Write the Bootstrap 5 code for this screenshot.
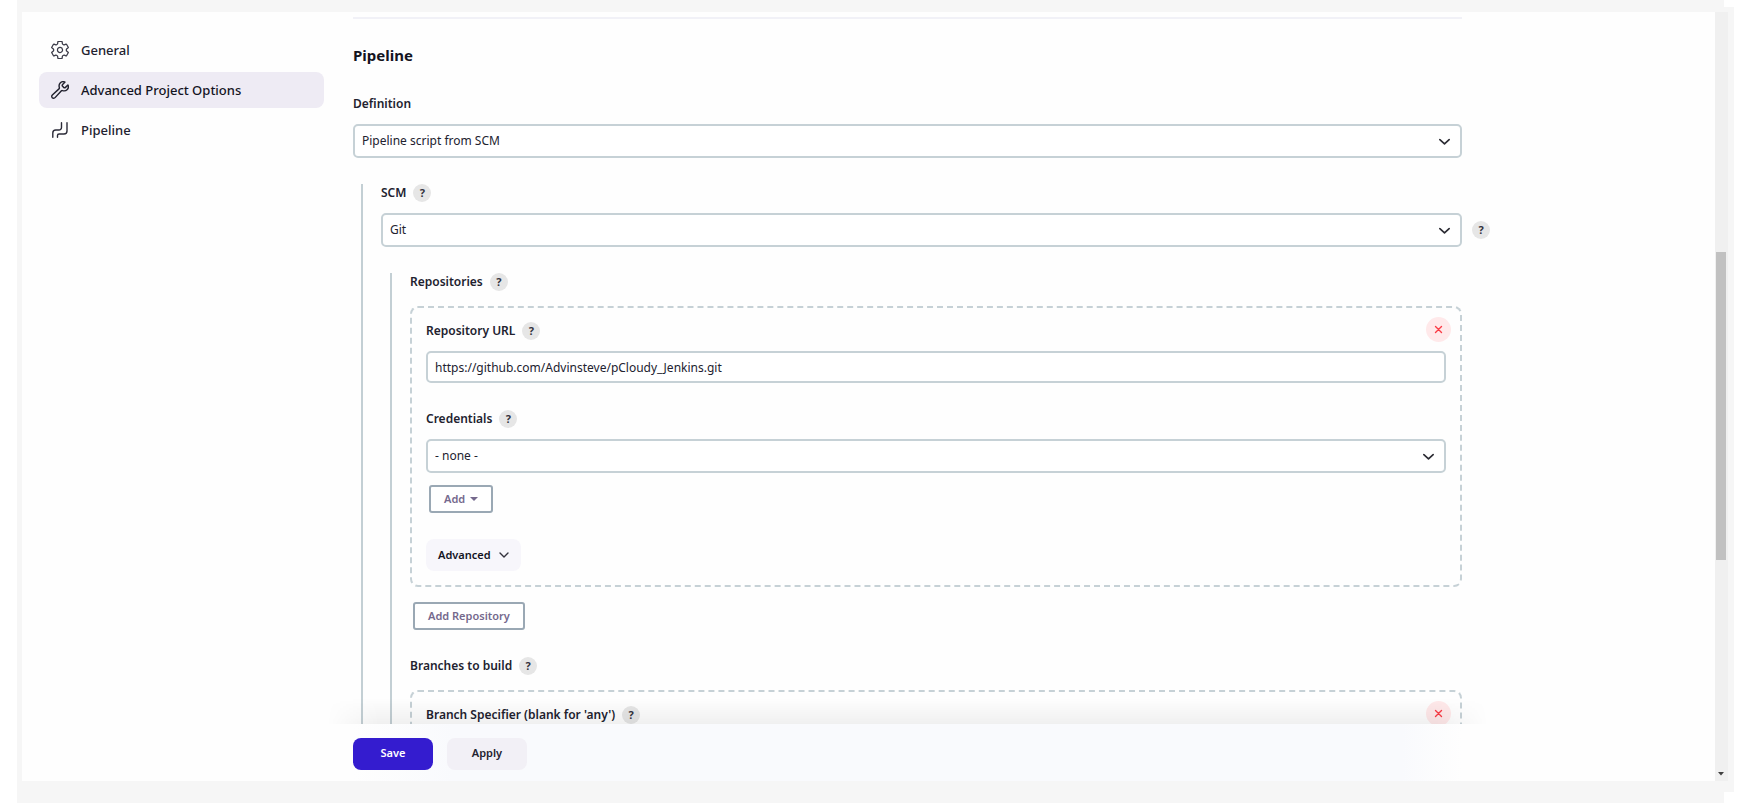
<!DOCTYPE html>
<html lang="en">
<head>
<meta charset="utf-8">
<meta name="viewport" content="width=device-width, initial-scale=1">
<title>Pipeline configuration</title>
<link rel="stylesheet" href="https://cdn.jsdelivr.net/npm/bootstrap@5.3.0/dist/css/bootstrap.min.css">
<style>
  body { font-family: "Noto Sans", "Open Sans", sans-serif; font-size: 12px; line-height: 18px; color: #22222f; background: #fff; }
  .stage { padding: 0 25px 0 17px; }
  /* grey surround with its two stepped right-hand corners */
  .surround {
    background: #f6f6f6; padding: 12px 6px 22px 5px;
    clip-path: polygon(0 0, calc(100% - 10px) 0, calc(100% - 10px) 7px, 100% 7px, 100% calc(100% - 11px), calc(100% - 10px) calc(100% - 11px), calc(100% - 10px) 100%, 0 100%);
  }
  .app-window { background: #fefefe; }

  .side-menu { width: 331px; padding: 20px 29px 0 17px; }
  .side-menu .nav { gap: 4px; }
  .side-menu .nav-link { display: flex; align-items: center; gap: 12px; height: 36px; padding: 0 12px; border-radius: 8px; color: #22222f; font-size: 13px; font-weight: 500; }
  .side-menu .nav-link.active { background: #eeebf4; color: #14141f; }

  .config-form { padding: 5px 253px 0 0; min-height: 0; }
  .section-rule { height: 2px; background: #f1f1f7; }
  .section-title { font-size: 15px; line-height: 24px; font-weight: 700; color: #14141f; margin: 24px 0 0; }
  .field-label { font-weight: 600; line-height: 18px; }
  .label-row { display: flex; align-items: center; gap: 7px; height: 18px; }
  .label-row + .form-control, .label-row + .select-side, .label-row + .form-select, .field-label + .form-select { margin-top: 11px; }
  .label-row + .repeat-box { margin-top: 15px; }
  .form-control + .label-row, .outline-btn + .label-row { margin-top: 27px; }

  .form-control, .form-select {
    border: 2px solid #c6d1d6; border-radius: 5px; color: #22222f; background-color: #fff;
    font-size: 12px; line-height: 18px; padding: 0 7px; height: 34px;
  }
  .form-control { height: 32px; }
  .form-select {
    padding-right: 36px; background-position: right 9px center; background-size: 13px 13px;
    background-image: url("data:image/svg+xml,%3csvg xmlns='http://www.w3.org/2000/svg' viewBox='0 0 14 14'%3e%3cpath fill='none' stroke='%232b2b33' stroke-width='1.8' stroke-linecap='round' stroke-linejoin='round' d='M2 5l5 4.5L12 5'/%3e%3c/svg%3e");
  }

  .help-btn { width: 18px; height: 18px; padding: 0; border: 0; border-radius: 50%; background: #e6e6e6; color: #33333d; font-size: 11px; line-height: 18px; font-weight: 700; flex: none; }
  .select-side { position: relative; }
  .select-side > .help-btn { position: absolute; left: calc(100% + 10px); top: 8px; }

  .nest { border-left: 2px solid #c3cfd4; padding-left: 18px; margin-top: 26px; }
  .nest-outer { margin-left: 8px; }
  .nest-inner { margin-left: 9px; }
  .repeat-box { border: 2px dashed #c6d1d6; border-radius: 8px; padding: 14px; position: relative; }
  .remove-btn { position: absolute; right: 9px; top: 9px; width: 25px; height: 25px; padding: 0; border: 0; border-radius: 50%; background: #ffe9ea; display: flex; align-items: center; justify-content: center; }

  .outline-btn { display: block; border: 2px solid #9aa8b4; border-radius: 3px; background: #fff; color: #75698d; font-size: 11px; line-height: 16px; font-weight: 600; height: 28px; padding: 0 13px; margin: 15px 0 0 3px; }
  .form-select + .outline-btn { margin-top: 12px; }
  .outline-btn.dropdown-toggle::after { margin-left: 5px; vertical-align: 2px; border-width: 4px 4px 0; }
  .soft-btn { border: 0; border-radius: 8px; height: 32px; font-size: 11px; font-weight: 600; color: #14141f; background: #f7f6fb; padding: 0 12px; margin-top: 26px; }

  .action-bar {
    height: 57px; margin-right: 253px; padding-top: 2px; gap: 14px; position: relative;
    background: linear-gradient(90deg, #fefefe 0, #f9fafd 100px, #f9fafd calc(100% - 60px), #fefefe 100%);
  }
  .action-bar::before {
    content: ""; position: absolute; left: -26px; right: -26px; bottom: 100%; height: 26px;
    background: linear-gradient(0deg, rgba(0,0,0,.055), rgba(0,0,0,0));
    -webkit-mask-image: linear-gradient(90deg, transparent, #000 52px, #000 calc(100% - 52px), transparent);
    mask-image: linear-gradient(90deg, transparent, #000 52px, #000 calc(100% - 52px), transparent);
    pointer-events: none;
  }
  .action-bar .btn { width: 80px; height: 32px; padding: 0; border: 0; border-radius: 8px; font-size: 11px; font-weight: 600; }
  .save-btn, .save-btn:hover { background: #341ccf; color: #fff; }
  .apply-btn, .apply-btn:hover { background: #f2f0f6; color: #22222f; }

  .scroll-track { width: 13px; background: #f0f0f0; padding: 0 2px 0 1px; }
  .scroll-thumb { background: #c1c1c1; }
  .scroll-arrow { padding-bottom: 4px; }
</style>
</head>
<body>
<div class="stage vh-100">
  <div class="surround h-100">
    <div class="app-window h-100 d-flex overflow-hidden">

      <aside class="side-menu flex-shrink-0">
        <nav class="nav flex-column">
          <a class="nav-link" href="#general">
            <svg width="18" height="18" viewBox="30 30 452 452" fill="none" stroke="#3b3b48" stroke-width="32" stroke-linecap="round" stroke-linejoin="round" aria-hidden="true"><path d="M262.290 192.310a64 64 0 1057.400 57.400 64.130 64.130 0 00-57.400-57.400zM416.390 256a154.340 154.340 0 01-1.530 20.790l45.210 35.460a10.810 10.810 0 012.450 13.750l-42.770 74a10.810 10.810 0 01-13.140 4.590l-44.900-18.080a16.110 16.110 0 00-15.170 1.750A164.480 164.480 0 01325 400.800a15.940 15.940 0 00-8.820 12.140l-6.730 47.890a11.080 11.080 0 01-10.680 9.170h-85.540a11.110 11.110 0 01-10.690-8.870l-6.720-47.820a16.070 16.070 0 00-9-12.220 155.300 155.300 0 01-21.460-12.570 16 16 0 00-15.110-1.710l-44.890 18.070a10.810 10.810 0 01-13.140-4.580l-42.770-74a10.800 10.800 0 012.450-13.750l38.210-30a16.050 16.050 0 006-14.080c-.36-4.170-.58-8.330-.58-12.500s.21-8.270.58-12.350a16 16 0 00-6.070-13.940l-38.190-30A10.810 10.810 0 0149.480 186l42.770-74a10.810 10.810 0 0113.140-4.590l44.900 18.080a16.110 16.110 0 0015.170-1.750A164.480 164.480 0 01187 111.200a15.940 15.940 0 008.820-12.140l6.730-47.890A11.080 11.080 0 01213.230 42h85.540a11.110 11.110 0 0110.690 8.870l6.720 47.820a16.070 16.070 0 009 12.220 155.300 155.300 0 0121.460 12.570 16 16 0 0015.110 1.710l44.890-18.070a10.810 10.810 0 0113.140 4.580l42.770 74a10.800 10.800 0 01-2.450 13.750l-38.210 30a16.050 16.050 0 00-6.050 14.080c.33 4.140.55 8.300.55 12.470z"/></svg>
            General
          </a>
          <a class="nav-link active" href="#advanced" aria-current="true">
            <svg width="18" height="18" viewBox="30 30 452 452" fill="none" stroke="#22222f" stroke-width="36" stroke-linecap="round" stroke-linejoin="round" aria-hidden="true"><path d="M393.870 190a32.100 32.100 0 01-45.250 0l-26.570-26.570a32.090 32.090 0 010-45.260L382.190 58a1 1 0 00-.3-1.640c-38.820-16.640-89.150-8.160-121.110 23.570-30.580 30.350-32.320 76-21.120 115.840a31.930 31.930 0 01-9.060 32.080L64 380a48.170 48.170 0 1068 68l153.860-167a31.930 31.930 0 0131.600-9.130c39.540 10.590 84.540 8.600 114.720-21.190 32.490-32 39.500-88.560 23.750-120.930a1 1 0 00-1.600-.26z"/></svg>
            Advanced Project Options
          </a>
          <a class="nav-link" href="#pipeline">
            <svg width="18" height="18" viewBox="0 0 18 18" fill="none" stroke="#2b2b38" stroke-width="1.4" stroke-linecap="round" aria-hidden="true"><path d="M1.800 16.300V12a3 3 0 0 1 3-3H8a2.500 2.500 0 0 0 2.500-2.500V1.700M6.500 16.300V14.600a1.600 1.600 0 0 1 1.600-1.600H13a3 3 0 0 0 3-3V1.700"/></svg>
            Pipeline
          </a>
        </nav>
      </aside>

      <main class="flex-grow-1 d-flex flex-column">
        <form class="config-form flex-grow-1 overflow-hidden" id="config">
          <div class="section-rule"></div>
          <h2 class="section-title" id="pipeline">Pipeline</h2>

          <label class="field-label d-block mt-4 pt-1" for="definition">Definition</label>
          <select class="form-select" id="definition"><option>Pipeline script from SCM</option></select>

          <div class="nest nest-outer">
            <div class="label-row">
              <label class="field-label" for="scm">SCM</label>
              <button type="button" class="help-btn" aria-label="Help for SCM">?</button>
            </div>
            <div class="select-side">
              <select class="form-select" id="scm"><option>Git</option></select>
              <button type="button" class="help-btn" aria-label="Help for Git">?</button>
            </div>

            <div class="nest nest-inner">
              <div class="label-row">
                <span class="field-label">Repositories</span>
                <button type="button" class="help-btn" aria-label="Help for Repositories">?</button>
              </div>

              <div class="repeat-box">
                <button type="button" class="remove-btn" aria-label="Remove repository">
                  <svg width="9" height="9" viewBox="0 0 9 9" stroke="#fa3c46" stroke-width="1.4" stroke-linecap="round"><path d="M1.500 1.500l6 6M7.500 1.500l-6 6"/></svg>
                </button>
                <div class="label-row">
                  <label class="field-label" for="repo-url">Repository URL</label>
                  <button type="button" class="help-btn" aria-label="Help for Repository URL">?</button>
                </div>
                <input type="text" class="form-control" id="repo-url" value="https://github.com/Advinsteve/pCloudy_Jenkins.git">
                <div class="label-row">
                  <label class="field-label" for="credentials">Credentials</label>
                  <button type="button" class="help-btn" aria-label="Help for Credentials">?</button>
                </div>
                <select class="form-select" id="credentials"><option>- none -</option></select>
                <button type="button" class="outline-btn dropdown-toggle">Add</button>
                <button type="button" class="soft-btn d-flex align-items-center gap-2">Advanced
                  <svg width="10" height="10" viewBox="0 0 10 10" fill="none" stroke="#33333d" stroke-width="1.4" stroke-linecap="round" stroke-linejoin="round"><path d="M1 3l4 4 4-4"/></svg>
                </button>
              </div>

              <button type="button" class="outline-btn">Add Repository</button>

              <div class="label-row">
                <span class="field-label">Branches to build</span>
                <button type="button" class="help-btn" aria-label="Help for Branches to build">?</button>
              </div>
              <div class="repeat-box">
                <button type="button" class="remove-btn" aria-label="Remove branch">
                  <svg width="9" height="9" viewBox="0 0 9 9" stroke="#fa3c46" stroke-width="1.4" stroke-linecap="round"><path d="M1.500 1.500l6 6M7.500 1.500l-6 6"/></svg>
                </button>
                <div class="label-row">
                  <span class="field-label">Branch Specifier (blank for 'any')</span>
                  <button type="button" class="help-btn" aria-label="Help for Branch Specifier">?</button>
                </div>
              </div>
            </div>
          </div>
        </form>

        <div class="action-bar flex-shrink-0 d-flex align-items-center">
          <button type="submit" form="config" class="btn save-btn">Save</button>
          <button type="button" class="btn apply-btn">Apply</button>
        </div>
      </main>

      <div class="scroll-track flex-shrink-0 d-flex flex-column" aria-hidden="true">
        <div style="flex:240 0 0"></div>
        <div class="scroll-thumb" style="flex:308 0 0"></div>
        <div class="scroll-arrow d-flex align-items-end justify-content-center" style="flex:217 0 0">
          <svg width="6" height="6" viewBox="0 0 6 6" fill="#404040"><path d="M0 1h6L3 4.500z"/></svg>
        </div>
      </div>
    </div>
  </div>
</div>
<script src="https://cdn.jsdelivr.net/npm/bootstrap@5.3.0/dist/js/bootstrap.bundle.min.js"></script>
</body>
</html>
